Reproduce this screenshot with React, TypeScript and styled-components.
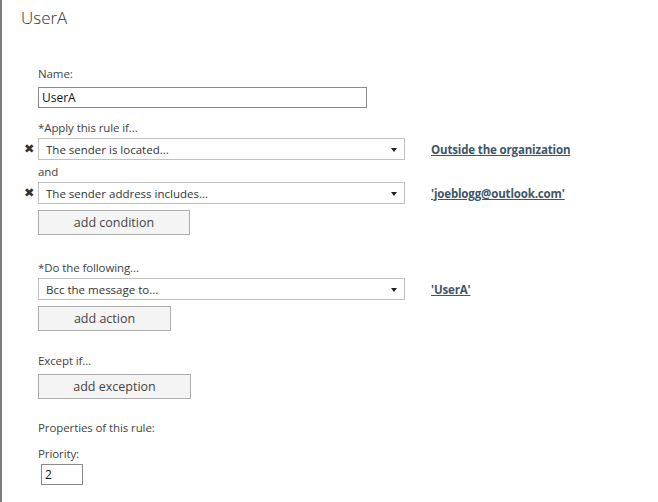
import React from "react";
import styled, { createGlobalStyle } from "styled-components";

const Global = createGlobalStyle`
  html, body { margin: 0; padding: 0; background: #fff; }
  body { font-family: "Open Sans", "Noto Sans", sans-serif; color: #444; }
  * { box-sizing: border-box; }
`;

const Page = styled.div`
  min-height: 502px;
  border-left: 2px solid #7d7d7d;
  padding: 6px 0 0 0;
`;

const Title = styled.h1`
  margin: 0 0 0 19px;
  font-family: "Open Sans", sans-serif;
  font-weight: 300;
  font-size: 17px;
  line-height: 24px;
  color: #333;
`;

const Form = styled.div`
  padding: 36px 0 0 20px;
  display: flex;
  flex-direction: column;
`;

const Label = styled.div<{ $top?: number }>`
  margin: ${(p) => p.$top ?? 0}px 0 2px 16px;
  font-size: 11.5px;
  line-height: 16px;
  color: #444;
  letter-spacing: -0.1px;
`;

const TextBox = styled.div<{ $w: number; $left?: number; $top?: number }>`
  margin: ${(p) => p.$top ?? 0}px 0 0 ${(p) => 16 + (p.$left ?? 0)}px;
  width: ${(p) => p.$w}px;
  height: 21px;
  border: 1px solid #8a8a8a;
  font-size: 12px;
  line-height: 19px;
  padding-left: 3px;
  color: #111;
  background: #fff;
`;

const Row = styled.div<{ $top?: number }>`
  display: flex;
  align-items: center;
  margin-top: ${(p) => p.$top ?? 0}px;
`;

const Remove = styled.span`
  width: 16px;
  font-size: 12.5px;
  line-height: 1;
  color: #333;
  padding-left: 2px;
  font-family: "DejaVu Sans", sans-serif;
  font-weight: bold;
`;

const Spacer = styled.span`
  width: 16px;
`;

const Select = styled.div`
  width: 367px;
  height: 22px;
  border: 1px solid #c2c2c2;
  display: flex;
  align-items: center;
  justify-content: space-between;
  padding: 0 7px 0 7px;
  font-size: 11.5px;
  color: #333;
  background: #fff;
`;

const Arrow = styled.span`
  width: 0;
  height: 0;
  border-left: 3.5px solid transparent;
  border-right: 3.5px solid transparent;
  border-top: 4px solid #222;
  margin-top: 2px;
`;

const Link = styled.a`
  margin-left: 26px;
  font-size: 11.5px;
  font-weight: 700;
  color: #3d5668;
  text-decoration: underline;
  letter-spacing: -0.15px;
  cursor: pointer;
`;

const Button = styled.button<{ $w: number; $top?: number }>`
  margin: ${(p) => p.$top ?? 0}px 0 0 16px;
  width: ${(p) => p.$w}px;
  height: 25px;
  border: 1px solid #adadad;
  background: #f4f4f4;
  font-family: "Open Sans", sans-serif;
  font-size: 12.5px;
  color: #444;
  padding: 0;
  align-self: flex-start;
`;

export default function App() {
  return (
    <>
      <Global />
      <Page>
        <Title>UserA</Title>
        <Form>
          <Label>Name:</Label>
          <TextBox $w={329} $top={3}>UserA</TextBox>

          <Label $top={12}>*Apply this rule if...</Label>
          <Row>
            <Remove>✖</Remove>
            <Select>
              The sender is located...
              <Arrow />
            </Select>
            <Link>Outside the organization</Link>
          </Row>
          <Label $top={4}>and</Label>
          <Row>
            <Remove>✖</Remove>
            <Select>
              The sender address includes...
              <Arrow />
            </Select>
            <Link>'joeblogg@outlook.com'</Link>
          </Row>
          <Button $w={152} $top={6}>add condition</Button>

          <Label $top={25}>*Do the following...</Label>
          <Row>
            <Spacer />
            <Select>
              Bcc the message to...
              <Arrow />
            </Select>
            <Link>'UserA'</Link>
          </Row>
          <Button $w={133} $top={6}>add action</Button>

          <Label $top={22}>Except if...</Label>
          <Button $w={153} $top={3}>add exception</Button>

          <Label $top={21}>Properties of this rule:</Label>
          <Label $top={8}>Priority:</Label>
          <TextBox $w={42} $left={3}>2</TextBox>
        </Form>
      </Page>
    </>
  );
}
